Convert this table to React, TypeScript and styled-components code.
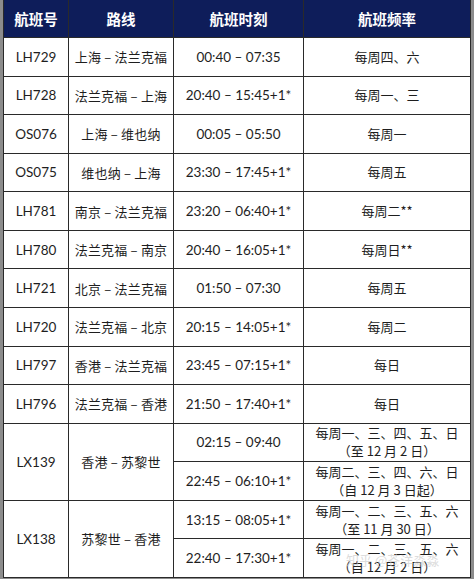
import React from 'react';
import styled, { createGlobalStyle } from 'styled-components';

const GlobalStyle = createGlobalStyle`
    html, body {
        margin: 0;
        padding: 0;
        background: #8c8c8c;
    }
    body {
        width: 474px;
        height: 579px;
        overflow: hidden;
    }
`;

const Page = styled.div`
    position: relative;
    width: 474px;
    height: 579px;
    padding-left: 3px;
    box-sizing: border-box;
`;

const Grid = styled.div`
    display: grid;
    grid-template-columns: 64px 104px 129px 166px;
    grid-template-rows: 37px repeat(14, 1fr);
    gap: 1px;
    width: 468px;
    height: 578px;
    box-sizing: border-box;
    padding: 0 1px 1px 1px;
    background: #2a2a2a;
    font-family: "Lato", "Noto Sans CJK SC", sans-serif;
`;

const HeadCell = styled.div`
    display: flex;
    align-items: center;
    justify-content: center;
    background: #0e1d5a;
    color: #fff;
    font-family: "Noto Sans CJK SC", sans-serif;
    font-weight: 700;
    font-size: 14.5px;
`;

const Cell = styled.div<{ span?: number }>`
    display: flex;
    align-items: center;
    justify-content: center;
    background: #fff;
    color: #1e1e1e;
    font-size: 13.5px;
    ${({ span }) => (span ? `grid-row: span ${span};` : '')}
`;

const Route = styled(Cell)`
    font-family: "Noto Sans CJK SC", sans-serif;
    font-size: 13px;
    letter-spacing: 0.2px;
`;

const Freq = styled(Cell)`
    flex-direction: column;
    font-family: "Noto Sans CJK SC", sans-serif;
    font-size: 13px;
    line-height: 18px;
`;

const Watermark = styled.div`
    position: absolute;
    left: 346px;
    top: 550px;
    font-family: "Noto Sans CJK SC", sans-serif;
    font-size: 13px;
    color: rgba(205, 205, 205, 0.7);
    pointer-events: none;
`;

type Row = { no: string; route: string; time: string; freq: string };

const rows: Row[] = [
    { no: 'LH729', route: '上海 – 法兰克福', time: '00:40 – 07:35', freq: '每周四、六' },
    { no: 'LH728', route: '法兰克福 – 上海', time: '20:40 – 15:45+1*', freq: '每周一、三' },
    { no: 'OS076', route: '上海 – 维也纳', time: '00:05 – 05:50', freq: '每周一' },
    { no: 'OS075', route: '维也纳 – 上海', time: '23:30 – 17:45+1*', freq: '每周五' },
    { no: 'LH781', route: '南京 – 法兰克福', time: '23:20 – 06:40+1*', freq: '每周二**' },
    { no: 'LH780', route: '法兰克福 – 南京', time: '20:40 – 16:05+1*', freq: '每周日**' },
    { no: 'LH721', route: '北京 – 法兰克福', time: '01:50 – 07:30', freq: '每周五' },
    { no: 'LH720', route: '法兰克福 – 北京', time: '20:15 – 14:05+1*', freq: '每周二' },
    { no: 'LH797', route: '香港 – 法兰克福', time: '23:45 – 07:15+1*', freq: '每日' },
    { no: 'LH796', route: '法兰克福 – 香港', time: '21:50 – 17:40+1*', freq: '每日' },
];

const split = [
    {
        no: 'LX139',
        route: '香港 – 苏黎世',
        legs: [
            { time: '02:15 – 09:40', freq: ['每周一、三、四、五、日', '（至 12 月 2 日）'] },
            { time: '22:45 – 06:10+1*', freq: ['每周二、三、四、六、日', '（自 12 月 3 日起）'] },
        ],
    },
    {
        no: 'LX138',
        route: '苏黎世 – 香港',
        legs: [
            { time: '13:15 – 08:05+1*', freq: ['每周一、二、三、五、六', '（至 11 月 30 日）'] },
            { time: '22:40 – 17:30+1*', freq: ['每周一、二、三、五、六', '（自 12 月 2 日）'] },
        ],
    },
];

const App = () => {
    return (
        <Page>
            <GlobalStyle />
            <Grid>
                <HeadCell>航班号</HeadCell>
                <HeadCell>路线</HeadCell>
                <HeadCell>航班时刻</HeadCell>
                <HeadCell>航班频率</HeadCell>
                {rows.map((r) => (
                    <React.Fragment key={r.no}>
                        <Cell>{r.no}</Cell>
                        <Route>{r.route}</Route>
                        <Cell>{r.time}</Cell>
                        <Freq>{r.freq}</Freq>
                    </React.Fragment>
                ))}
                {split.map((s) => (
                    <React.Fragment key={s.no}>
                        <Cell span={2}>{s.no}</Cell>
                        <Route span={2}>{s.route}</Route>
                        {s.legs.map((leg) => (
                            <React.Fragment key={leg.time}>
                                <Cell>{leg.time}</Cell>
                                <Freq>
                                    <span>{leg.freq[0]}</span>
                                    <span>{leg.freq[1]}</span>
                                </Freq>
                            </React.Fragment>
                        ))}
                    </React.Fragment>
                ))}
            </Grid>
            <Watermark>知乎 @苍洋淼淼</Watermark>
        </Page>
    );
};

export default App;
